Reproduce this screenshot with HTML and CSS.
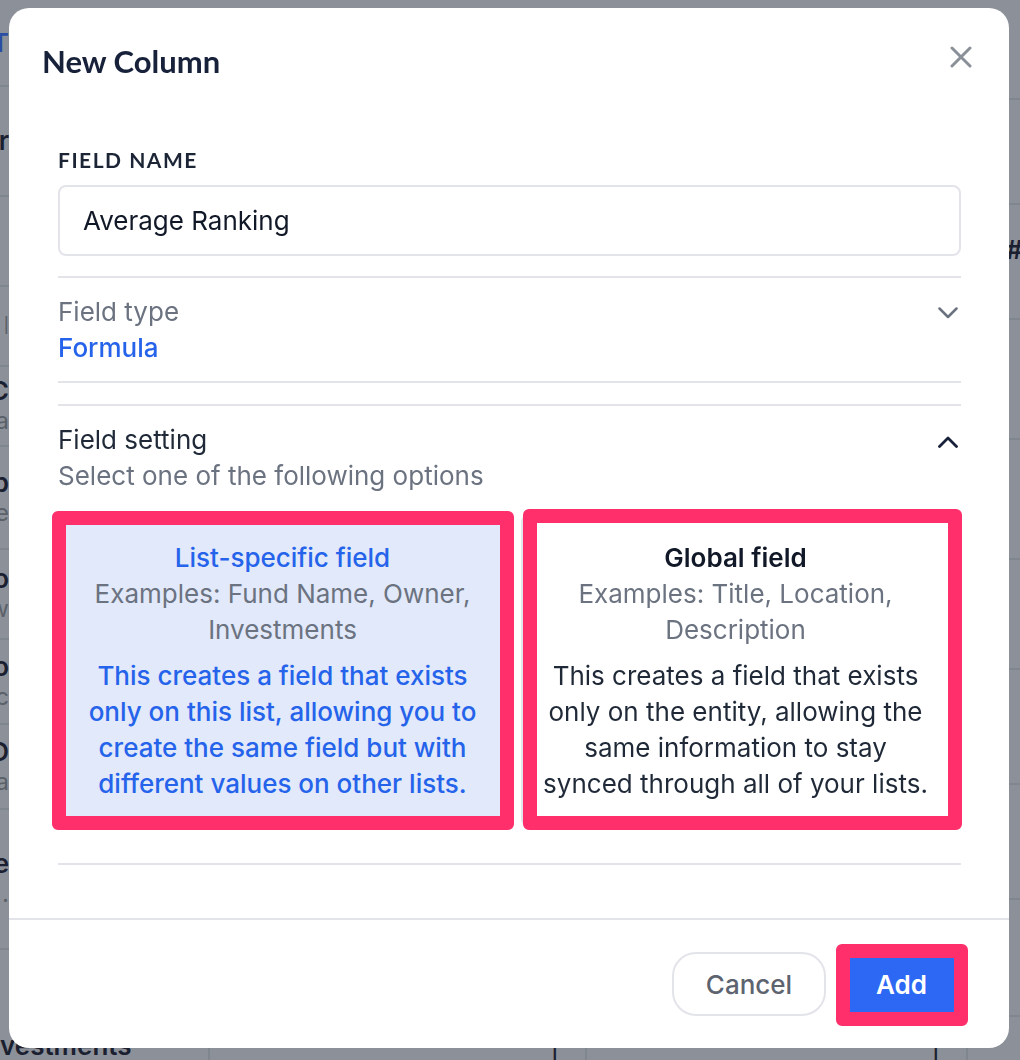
FILE: index.html
```html
<!DOCTYPE html>
<html lang="en">
<head>
<meta charset="utf-8">
<title>New Column</title>
<link rel="stylesheet" href="styles.css">
</head>
<body>
<div class="page" aria-hidden="true">
  <div class="strip strip-left">
    <div class="srow h87"><span class="frag frag-blue">T</span></div>
    <div class="srow h110"><span class="frag frag-bold">Fundr</span></div>
    <div class="srow h90"></div>
    <div class="srow h80"><span class="frag frag-thin">l</span></div>
    <div class="srow h80"><span class="frag frag-bold">C</span><span class="frag frag-sub">a</span></div>
    <div class="srow h103"><span class="frag frag-bold">p</span><span class="frag frag-sub">e</span></div>
    <div class="srow h90"><span class="frag frag-bold">o</span><span class="frag frag-sub">w</span></div>
    <div class="srow h85"><span class="frag frag-bold">o</span><span class="frag frag-sub">c</span></div>
    <div class="srow h85"><span class="frag frag-bold">D</span><span class="frag frag-sub">a</span></div>
    <div class="srow h140"><span class="frag frag-bold">e</span><span class="frag frag-sub">. .</span></div>
  </div>
  <div class="page-middle"></div>
  <div class="strip strip-right">
    <div class="srow h100"></div>
    <div class="srow h105"></div>
    <div class="srow h115 top"><span class="frag frag-bold hash">#</span></div>
    <div class="srow h120"></div>
    <div class="srow h120"></div>
    <div class="srow h110"></div>
    <div class="srow h115"></div>
    <div class="srow h115"></div>
    <div class="srow h117"></div>
  </div>
  <div class="page-bottom">
    <div class="bcell bcell-name">vestments</div>
    <div class="bcell bcell-num">1</div>
    <div class="bcell bcell-num">1</div>
    <div class="bcell"></div>
  </div>
</div>

<div class="overlay">
  <div class="modal" role="dialog" aria-labelledby="modal-title">
    <header class="modal-header">
      <h2 class="modal-title" id="modal-title">New Column</h2>
      <button class="close-btn" type="button" aria-label="Close">
        <svg width="22" height="22" viewBox="0 0 22 22" fill="none" stroke="currentColor" stroke-width="3" stroke-linecap="round">
          <path d="M2 2 L20 20 M20 2 L2 20"/>
        </svg>
      </button>
    </header>

    <div class="modal-body">
      <label class="field-label" for="field-name">FIELD NAME</label>
      <input class="text-input" id="field-name" type="text" value="Average Ranking">

      <div class="section section-type">
        <div class="section-text">
          <div class="section-title muted">Field type</div>
          <div class="section-value">Formula</div>
        </div>
        <svg class="chevron chevron-down" width="20" height="12" viewBox="0 0 20 12" fill="none" stroke="currentColor" stroke-width="2.5" stroke-linecap="round" stroke-linejoin="round">
          <path d="M1.5 1.5 L10 10 L18.5 1.5"/>
        </svg>
      </div>

      <div class="section section-setting">
        <div class="section-head">
          <div class="section-text">
            <div class="section-title">Field setting</div>
            <div class="section-sub">Select one of the following options</div>
          </div>
          <svg class="chevron chevron-up" width="20" height="12" viewBox="0 0 20 12" fill="none" stroke="currentColor" stroke-width="2.8" stroke-linecap="round" stroke-linejoin="round">
            <path d="M1.5 10.5 L10 2 L18.5 10.5"/>
          </svg>
        </div>

        <div class="options">
          <div class="option option-selected annotated annot-left">
            <div class="option-title">List-specific field</div>
            <div class="option-examples">Examples: Fund Name, Owner, Investments</div>
            <div class="option-desc">This creates a field that exists only on this list, allowing you to create the same field but with different values on other lists.</div>
          </div>
          <div class="option option-global annotated annot-right">
            <div class="option-title">Global field</div>
            <div class="option-examples">Examples: Title, Location, Description</div>
            <div class="option-desc">This creates a field that exists only on the entity, allowing the same information to stay synced through all of your lists.</div>
          </div>
        </div>
      </div>
    </div>

    <footer class="modal-footer">
      <button class="btn btn-cancel" type="button">Cancel</button>
      <button class="btn btn-add annotated annot-add" type="button">Add</button>
    </footer>
  </div>
</div>
</body>
</html>
```

FILE: styles.css
```css
* { box-sizing: border-box; }

html, body {
  margin: 0;
  height: 100%;
}

body {
  background: #8c9199;
  font-family: "Inter", "Noto Sans", sans-serif;
  color: #111827;
  overflow: hidden;
}

/* ---------- dimmed page behind the dialog ---------- */
.page {
  width: 1020px;
  height: 1060px;
  display: grid;
  grid-template-columns: 9px 1fr 11px;
  grid-template-rows: 1040px 20px;
}

.strip {
  display: flex;
  flex-direction: column;
  overflow: hidden;
}

.srow {
  flex: none;
  display: flex;
  flex-direction: column;
  justify-content: center;
  align-items: flex-end;
  border-bottom: 2px solid #80868e;
}

.strip-right .srow { align-items: flex-start; }
.srow.top { justify-content: flex-start; padding-top: 30px; }

.h80 { height: 80px; }
.h85 { height: 85px; }
.h87 { height: 87px; }
.h90 { height: 90px; }
.h100 { height: 100px; }
.h103 { height: 103px; }
.h105 { height: 105px; }
.h110 { height: 110px; }
.h115 { height: 115px; }
.h117 { height: 117px; }
.h120 { height: 120px; }
.h140 { height: 140px; }

.frag {
  white-space: nowrap;
  line-height: 30px;
}
.frag-blue { color: #2a4da6; font-size: 26px; font-weight: 600; }
.frag-bold { color: #1a2030; font-size: 26px; font-weight: 600; }
.frag-thin { color: #5b6169; font-size: 24px; font-weight: 300; }
.frag-sub { color: #5b6169; font-size: 24px; }
.hash { margin-left: -3px; }

.page-bottom {
  grid-column: 1 / -1;
  display: grid;
  grid-template-columns: 210px 377px 381px 1fr;
  overflow: hidden;
}

.bcell {
  border-right: 2px solid #80868e;
  line-height: 20px;
  font-size: 26px;
  color: #1a2030;
  white-space: nowrap;
  overflow: hidden;
}
.bcell:last-child { border-right: none; }
.bcell-name { font-weight: 600; margin-top: -4px; }
.bcell-num { text-align: right; padding-right: 27px; font-size: 24px; padding-top: 2px; }

/* ---------- dialog ---------- */
.overlay {
  position: fixed;
  inset: 0;
  padding: 8px 11px 12px 9px;
  display: flex;
}

.modal {
  flex: 1;
  background: #ffffff;
  border-radius: 20px;
  display: flex;
  flex-direction: column;
  overflow: hidden;
}

.modal-header {
  display: flex;
  justify-content: space-between;
  align-items: flex-start;
  padding: 35px 37px 0 33px;
}

.modal-title {
  margin: 0;
  font-family: "Lato", "Inter", sans-serif;
  font-weight: 700;
  font-size: 31px;
  line-height: 36px;
  color: #17213a;
}

.close-btn {
  margin-top: 3px;
  padding: 0;
  border: none;
  background: none;
  color: #8a9098;
  width: 22px;
  height: 22px;
  display: flex;
}

.modal-body {
  flex: 1;
  padding: 67px 48px 0 49px;
  display: flex;
  flex-direction: column;
}

.field-label {
  font-family: "Lato", "Inter", sans-serif;
  font-weight: 700;
  font-size: 21px;
  letter-spacing: 1.5px;
  line-height: 28px;
  color: #1c2536;
  margin-bottom: 11px;
}

.text-input {
  width: 100%;
  height: 71px;
  border: 2px solid #e3e4e9;
  border-radius: 8px;
  padding: 0 23px;
  font-family: "Inter", sans-serif;
  font-size: 26px;
  color: #111827;
  background: #fff;
  outline: none;
}

.section {
  border-top: 2px solid #e3e4e9;
  border-bottom: 2px solid #e3e4e9;
}

.section-type {
  margin-top: 20px;
  padding: 16px 0 15px;
  display: flex;
  justify-content: space-between;
  align-items: flex-start;
}

.section-setting {
  margin-top: 21px;
  padding: 16px 0 36px;
}

.section-head {
  display: flex;
  justify-content: space-between;
  align-items: flex-start;
}

.section-title,
.section-value,
.section-sub {
  font-size: 26px;
  line-height: 36px;
}

.section-title { color: #1f2937; }
.section-title.muted { color: #6b7280; }
.section-value { color: #2563eb; font-weight: 500; }
.section-sub { color: #6b7280; }

.chevron { flex: none; margin-right: 3px; }
.chevron-down { color: #6b7280; margin-top: 13px; }
.chevron-up { color: #17213a; margin-top: 14px; }

/* ---------- options ---------- */
.options {
  margin-top: 20px;
  display: grid;
  grid-template-columns: 454px 440px;
  gap: 9px;
}

.option {
  border: 2px solid #e3e4e9;
  border-radius: 8px;
  padding: 24px 30px 23px 25px;
  text-align: center;
  font-size: 26px;
  line-height: 36px;
}

.option-selected {
  background: #e1e9fa;
  border-color: #c9d7f6;
  color: #2563eb;
}

.option-global {
  padding: 24px 27px 23px 16px;
  color: #1f2937;
}

.option-title { font-weight: 500; }
.option-global .option-title { font-weight: 600; color: #111827; }
.option-examples { color: #6b7280; }
.option-desc { margin-top: 10px; }
.option-selected .option-desc { font-weight: 500; }

/* annotation highlight boxes drawn over elements */
.annotated { position: relative; }
.annotated::after {
  content: "";
  position: absolute;
  border: 14px solid #fe2f6b;
  border-radius: 6px;
  pointer-events: none;
}
.annot-left::after { top: -5px; right: -4px; bottom: -5px; left: -8px; }
.annot-right::after { top: -7px; right: -3px; bottom: -5px; left: 0; }
.annot-add::after { top: -8px; right: -7px; bottom: -10px; left: -6px; }

/* ---------- footer ---------- */
.modal-footer {
  border-top: 2px solid #e3e4e9;
  padding: 32px 48px;
  display: flex;
  justify-content: flex-end;
  gap: 16px;
}

.btn {
  height: 64px;
  font-family: "Inter", sans-serif;
  font-size: 26px;
  cursor: pointer;
}

.btn-cancel {
  width: 154px;
  border: 2px solid #e3e4e9;
  border-radius: 24px;
  background: #fff;
  color: #5d6470;
  font-weight: 500;
}

.btn-add {
  width: 119px;
  border: none;
  border-radius: 10px;
  background: #2c68f4;
  color: #fff;
  font-weight: 600;
}
```
